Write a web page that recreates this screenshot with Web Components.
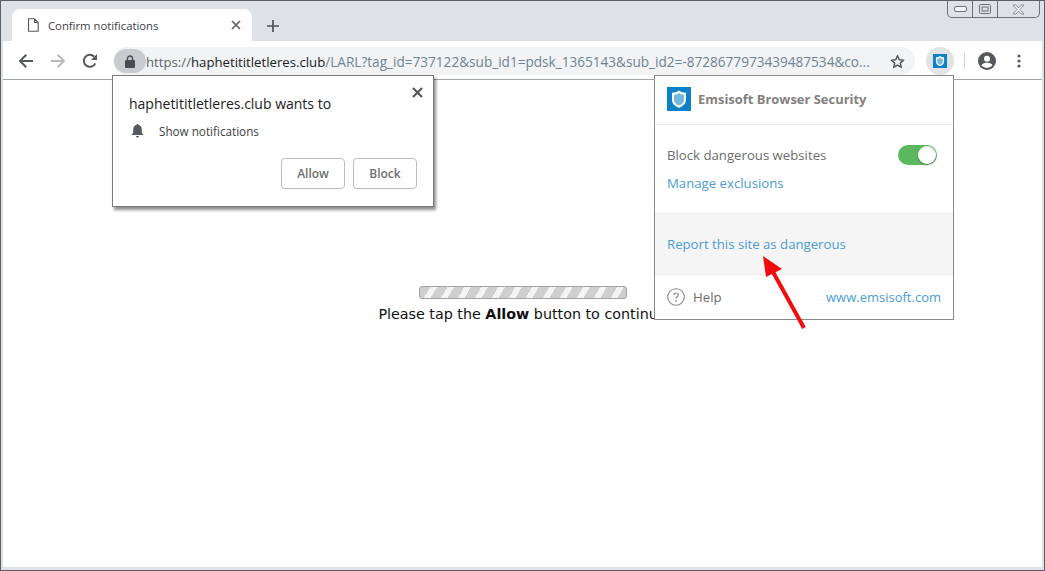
<!DOCTYPE html>
<html>
<head>
<meta charset="utf-8">
<title>Confirm notifications</title>
<style>
html, body { margin: 0; padding: 0; background: #fff; }
body { width: 1045px; height: 571px; overflow: hidden; font-family: "Open Sans", sans-serif; }
</style>
</head>
<body>
<browser-window>
    <tab-strip slot="tabs" title-text="Confirm notifications"></tab-strip>
    <nav-toolbar slot="toolbar"></nav-toolbar>
    <page-content></page-content>
    <permission-popup></permission-popup>
    <emsisoft-popup></emsisoft-popup>
    <red-arrow></red-arrow>
</browser-window>

<script>
class BrowserWindow extends HTMLElement {
    constructor() {
        super()
        this.attachShadow({mode: 'open'})
        this.shadowRoot.innerHTML = `
        <style>
        :host {
            display: flex;
            flex-direction: column;
            position: relative;
            box-sizing: border-box;
            width: 1045px;
            height: 571px;
            background: #dee1e6;
            border: 1px solid #5b6064;
            overflow: hidden;
        }
        .inner {
            flex: 1;
            display: flex;
            flex-direction: column;
            margin: 0 2px 3px 2px;
            min-height: 0;
        }
        </style>
        <div class="inner">
            <slot name="tabs"></slot>
            <slot name="toolbar"></slot>
            <slot></slot>
        </div>
        `
    }
}

class TabStrip extends HTMLElement {
    constructor() {
        super()
        this.attachShadow({mode: 'open'})
        this.shadowRoot.innerHTML = `
        <style>
        :host {
            display: flex;
            align-items: flex-end;
            height: 40px;
            padding-left: 9px;
            position: relative;
            font-family: "Open Sans", sans-serif;
        }
        .tab {
            box-sizing: border-box;
            width: 240px;
            height: 32px;
            background: #fff;
            border-radius: 8px 8px 0 0;
            display: flex;
            align-items: center;
            padding: 0 11px 0 15px;
            font-size: 11.3px;
            color: #3c4043;
        }
        .tab .title { flex: 1; margin-left: 9px; }
        .plus { margin-left: 15px; margin-bottom: 9px; display: flex; }
        .caption {
            position: absolute;
            top: 0;
            right: 2px;
            width: 93px;
            height: 17px;
            box-sizing: border-box;
            border: 1px solid #6d7278;
            border-top: 0;
            border-radius: 0 0 5px 5px;
            display: grid;
            grid-template-columns: 25px 25px 1fr;
        }
        .caption div { display: flex; align-items: center; justify-content: center; border-right: 1px solid #6d7278; }
        .caption div:last-child { border-right: 0; }
        </style>
        <div class="tab">
            <svg width="12" height="14" viewBox="0 0 12 14"><path d="M1.5.8h6l3.7 3.7v8.7h-9.700z M7.500.8v3.700h3.700" fill="none" stroke="#55585c" stroke-width="1.100"/></svg>
            <span class="title">Confirm notifications</span>
            <svg width="10" height="10" viewBox="0 0 10 10"><path d="M1 1l8 8M9 1l-8 8" stroke="#5f6368" stroke-width="1.700"/></svg>
        </div>
        <div class="plus">
            <svg width="12" height="12" viewBox="0 0 12 12"><path d="M6 0v12M0 6h12" stroke="#4f5256" stroke-width="1.700"/></svg>
        </div>
        <div class="caption">
            <div><svg width="13" height="6" viewBox="0 0 13 6"><rect x=".5" y=".5" width="12" height="5" rx="1.500" fill="#f4f5f6" stroke="#6d7278"/></svg></div>
            <div><svg width="12" height="10" viewBox="0 0 12 10"><rect x=".5" y=".5" width="11" height="9" rx="1" fill="none" stroke="#6d7278"/><rect x="3" y="3" width="6" height="4" fill="none" stroke="#6d7278"/></svg></div>
            <div><svg width="15" height="11" viewBox="0 0 15 11"><path d="M2 1h3l2.500 3 2.500-3h3l-4 4.500 4 4.500h-3l-2.500-3-2.500 3h-3l4-4.500z" fill="#f4f5f6" stroke="#767b80" stroke-width=".8"/></svg></div>
        </div>
        `
    }
}

class NavToolbar extends HTMLElement {
    constructor() {
        super()
        this.attachShadow({mode: 'open'})
        this.shadowRoot.innerHTML = `
        <style>
        :host {
            display: flex;
            align-items: center;
            box-sizing: border-box;
            height: 39px;
            background: #fff;
            border-bottom: 1px solid #a3a6a9;
            padding: 2px 0 0 15px;
            font-family: "Open Sans", sans-serif;
        }
        .btn { width: 16px; height: 16px; display: flex; margin-right: 16px; }
        .omni {
            flex: none;
            width: 802px;
            height: 28px;
            box-sizing: border-box;
            background: #f1f3f4;
            border-radius: 14px;
            display: flex;
            align-items: center;
            font-size: 13.6px;
            white-space: nowrap;
        }
        .lock {
            width: 32px;
            height: 24px;
            margin-left: 1px;
            border-radius: 12px;
            background: #c9cbce;
            display: flex;
            align-items: center;
            justify-content: center;
            flex: none;
        }
        .url { flex: 1; min-width: 0; color: #6f8494; }
        .url b { font-weight: 400; font-size: 13.2px; color: #202124; }
        .url i { font-style: normal; font-size: 13.2px; color: #5f6368; }
        .star { margin: 0 10px 0 6px; display: flex; }
        .ext {
            width: 28px;
            height: 28px;
            border-radius: 14px;
            background: #e2e3e4;
            margin-left: 11px;
            display: flex;
            align-items: center;
            justify-content: center;
            flex: none;
        }
        .sep { width: 1px; height: 16px; background: #cfd1d3; margin: 0 13px 0 10px; }
        .dots { margin-left: 21px; display: flex; }
        .avatar { display: flex; }
        </style>
        <div class="btn"><svg width="16" height="16" viewBox="0 0 16 16"><path d="M15 8H2.500M8.300 1.700L2 8l6.300 6.300" fill="none" stroke="#55585c" stroke-width="2"/></svg></div>
        <div class="btn"><svg width="16" height="16" viewBox="0 0 16 16"><path d="M1 8h12.500M7.700 1.700L14 8l-6.300 6.300" fill="none" stroke="#b9bbbe" stroke-width="2"/></svg></div>
        <div class="btn" style="margin-right:15px"><svg width="16" height="16" viewBox="0 0 16 16"><path d="M13.300 10.300A6 6 0 1 1 12.200 3.700" fill="none" stroke="#55585c" stroke-width="2"/><path d="M15 1v6H9z" fill="#55585c"/></svg></div>
        <div class="omni">
            <div class="lock"><svg width="10" height="13" viewBox="0 0 10 13"><path d="M2.500 5V3.500a2.500 2.500 0 0 1 5 0V5" fill="none" stroke="#4a4d50" stroke-width="1.400"/><rect x="0" y="5" width="10" height="8" rx="1" fill="#4a4d50"/></svg></div>
            <div class="url"><i>https://</i><b>haphetititletleres.club</b>/LARL?tag_id=737122&amp;sub_id1=pdsk_1365143&amp;sub_id2=-8728677973439487534&amp;co...</div>
            <div class="star"><svg width="15" height="15" viewBox="0 0 24 24"><path d="M12 2.800l2.800 6.500 7 .6-5.300 4.600 1.600 6.900-6.100-3.700-6.100 3.700 1.600-6.900-5.300-4.600 7-.6z" fill="none" stroke="#55585c" stroke-width="2.400" stroke-linejoin="round"/></svg></div>
        </div>
        <div class="ext">
            <svg width="14" height="14" viewBox="0 0 24 24"><rect width="24" height="24" fill="#0b82c6"/><path d="M12 3.500c2 1.500 4.500 2.200 7 2.200v7c0 4-3 6.500-7 8-4-1.500-7-4-7-8v-7c2.500 0 5-.7 7-2.200z" fill="#fff"/><path d="M12 6.300c1.500 1 3.200 1.500 4.900 1.700v4.700c0 2.700-2 4.500-4.900 5.700-2.900-1.200-4.900-3-4.900-5.700V8c1.700-.2 3.400-.7 4.900-1.700z" fill="#76b9e0"/></svg>
        </div>
        <div class="sep"></div>
        <div class="avatar"><svg width="18" height="18" viewBox="0 0 18 18"><circle cx="9" cy="9" r="9" fill="#55585c"/><circle cx="9" cy="6.700" r="3" fill="#fff"/><path d="M3.400 13.300c1.400-2 3.500-2.600 5.600-2.600s4.200.6 5.600 2.600A7 7 0 0 1 9 16a7 7 0 0 1-5.600-2.700z" fill="#fff"/></svg></div>
        <div class="dots"><svg width="4" height="14" viewBox="0 0 4 14"><circle cx="2" cy="2" r="1.600" fill="#55585c"/><circle cx="2" cy="7" r="1.600" fill="#55585c"/><circle cx="2" cy="12" r="1.600" fill="#55585c"/></svg></div>
        `
    }
}

class PageContent extends HTMLElement {
    constructor() {
        super()
        this.attachShadow({mode: 'open'})
        this.shadowRoot.innerHTML = `
        <style>
        :host {
            display: flex;
            flex-direction: column;
            align-items: center;
            flex: 1;
            background: #fff;
            padding-top: 206px;
            font-family: "DejaVu Sans", sans-serif;
            font-size: 14.3px;
            color: #111;
        }
        .bar {
            box-sizing: border-box;
            width: 208px;
            height: 13px;
            border: 1px solid #a3a3a3;
            border-radius: 3px;
            background: repeating-linear-gradient(120deg, #cfcfcf 0 9px, #f4f4f4 9px 14.7px);
        }
        p { margin: 5px 0 0; white-space: nowrap; line-height: 20px; }
        </style>
        <div class="bar"></div>
        <p>Please tap the <b>Allow</b> button to continue</p>
        `
    }
}

class PermissionPopup extends HTMLElement {
    constructor() {
        super()
        this.attachShadow({mode: 'open'})
        this.shadowRoot.innerHTML = `
        <style>
        :host {
            position: absolute;
            left: 111px;
            top: 74px;
            box-sizing: border-box;
            width: 322px;
            height: 132px;
            background: #fff;
            border: 1px solid #7a7a7a;
            box-shadow: 2px 3px 3px rgba(0,0,0,.45);
            padding: 18px 16px 0 16px;
            font-family: "Open Sans", sans-serif;
            color: #202124;
            display: flex;
            flex-direction: column;
        }
        .close { position: absolute; top: 11px; right: 10px; display: flex; }
        h1 { margin: 0; font-size: 14px; font-weight: 400; line-height: 19px; }
        .row { display: flex; align-items: center; margin-top: 9px; font-size: 11.7px; color: #3c4043; height: 18px; }
        .row svg { margin: 0 15px 0 2px; }
        .buttons { display: flex; justify-content: flex-end; gap: 8px; margin-top: 18px; }
        button {
            box-sizing: border-box;
            width: 64px;
            height: 31px;
            background: #fff;
            border: 1px solid #bcbcbc;
            border-radius: 4px;
            font: 600 12px "Open Sans", sans-serif;
            color: #6f6f6f;
            padding: 0;
        }
        </style>
        <div class="close"><svg width="11" height="11" viewBox="0 0 11 11"><path d="M1 1l9 9M10 1l-9 9" stroke="#55585c" stroke-width="2.200"/></svg></div>
        <h1>haphetititletleres.club wants to</h1>
        <div class="row">
            <svg width="13" height="14" viewBox="0 0 13 14"><path d="M6.500 0c.7 0 1 .5 1 1.100 2.200.5 3.300 2.300 3.300 4.500v3.200L12.500 11H.5l1.700-2.200V5.600c0-2.200 1.100-4 3.300-4.500C5.500.5 5.800 0 6.500 0zM5 12h3a1.500 1.500 0 0 1-3 0z" fill="#55585c"/></svg>
            <span>Show notifications</span>
        </div>
        <div class="buttons"><button>Allow</button><button>Block</button></div>
        `
    }
}

class EmsisoftPopup extends HTMLElement {
    constructor() {
        super()
        this.attachShadow({mode: 'open'})
        this.shadowRoot.innerHTML = `
        <style>
        :host {
            position: absolute;
            left: 653px;
            top: 74px;
            box-sizing: border-box;
            width: 300px;
            height: 245px;
            background: #fff;
            border: 1px solid #8b8b8b;
            font-family: "Open Sans", sans-serif;
            font-size: 13.2px;
            color: #6d6d6d;
            display: flex;
            flex-direction: column;
        }
        header {
            height: 49px;
            box-sizing: border-box;
            border-bottom: 1px solid #ececec;
            display: flex;
            align-items: center;
            padding: 0 12px 2px 12px;
            font-weight: 700;
            font-size: 12.95px;
            color: #847f7f;
        }
        header svg { margin-right: 7px; }
        .main { height: 88px; box-sizing: border-box; padding: 19px 16px 0 12px; }
        .toggle-row { display: flex; align-items: center; justify-content: space-between; height: 22px; }
        .toggle {
            width: 39px;
            height: 20px;
            border-radius: 10px;
            background: #5cb85c;
            position: relative;
        }
        .toggle::after {
            content: "";
            position: absolute;
            right: 1px;
            top: 1px;
            width: 18px;
            height: 18px;
            border-radius: 50%;
            background: #fff;
            box-shadow: 0 1px 2px rgba(0,0,0,.3);
        }
        a { color: #4b9cd3; text-decoration: none; }
        .manage { display: block; margin-top: 8px; line-height: 18px; }
        .report {
            height: 62px;
            box-sizing: border-box;
            background: #f5f5f5;
            border-top: 1px solid #ececec;
            border-bottom: 1px solid #ececec;
            padding: 0 12px 0 12px;
            display: flex;
            align-items: center;
        }
        footer {
            flex: 1;
            display: flex;
            align-items: center;
            justify-content: space-between;
            padding: 0 12px 0 12px;
        }
        .help { display: flex; align-items: center; gap: 8px; }
        footer a { font-size: 13px; }
        </style>
        <header>
            <svg width="24" height="24" viewBox="0 0 24 24"><rect width="24" height="24" fill="#0b82c6"/><path d="M12 3.500c2 1.500 4.500 2.200 7 2.200v7c0 4-3 6.500-7 8-4-1.500-7-4-7-8v-7c2.500 0 5-.7 7-2.200z" fill="#fff"/><path d="M12 6c1.500 1 3.200 1.500 5 1.700v5c0 2.700-2 4.500-5 5.800-3-1.300-5-3.100-5-5.800v-5c1.800-.2 3.500-.7 5-1.700z" fill="#76b9e0"/></svg>
            <span>Emsisoft Browser Security</span>
        </header>
        <div class="main">
            <div class="toggle-row"><span>Block dangerous websites</span><div class="toggle"></div></div>
            <a class="manage">Manage exclusions</a>
        </div>
        <div class="report"><a>Report this site as dangerous</a></div>
        <footer>
            <div class="help">
                <svg width="18" height="18" viewBox="0 0 18 18"><circle cx="9" cy="9" r="8.300" fill="none" stroke="#8a8a8a" stroke-width="1.100"/><path d="M6.700 7.100C6.800 5.700 7.800 5 9 5c1.300 0 2.300.8 2.300 2 0 1.700-2.300 1.800-2.300 3.500" fill="none" stroke="#8a8a8a" stroke-width="1.200"/><circle cx="9" cy="12.800" r=".9" fill="#8a8a8a"/></svg>
                <span>Help</span>
            </div>
            <a>www.emsisoft.com</a>
        </footer>
        `
    }
}

class RedArrow extends HTMLElement {
    constructor() {
        super()
        this.attachShadow({mode: 'open'})
        this.shadowRoot.innerHTML = `
        <style>
        :host { position: absolute; left: 762px; top: 254px; width: 44px; height: 76px; display: block; }
        </style>
        <svg width="44" height="76" viewBox="0 0 44 76"><path d="M0 1L3 22 19 14z" fill="#f10d0d"/><path d="M10 17L41 73" stroke="#f10d0d" stroke-width="4"/></svg>
        `
    }
}

window.customElements.define('browser-window', BrowserWindow)
window.customElements.define('tab-strip', TabStrip)
window.customElements.define('nav-toolbar', NavToolbar)
window.customElements.define('page-content', PageContent)
window.customElements.define('permission-popup', PermissionPopup)
window.customElements.define('emsisoft-popup', EmsisoftPopup)
window.customElements.define('red-arrow', RedArrow)
</script>
</body>
</html>
